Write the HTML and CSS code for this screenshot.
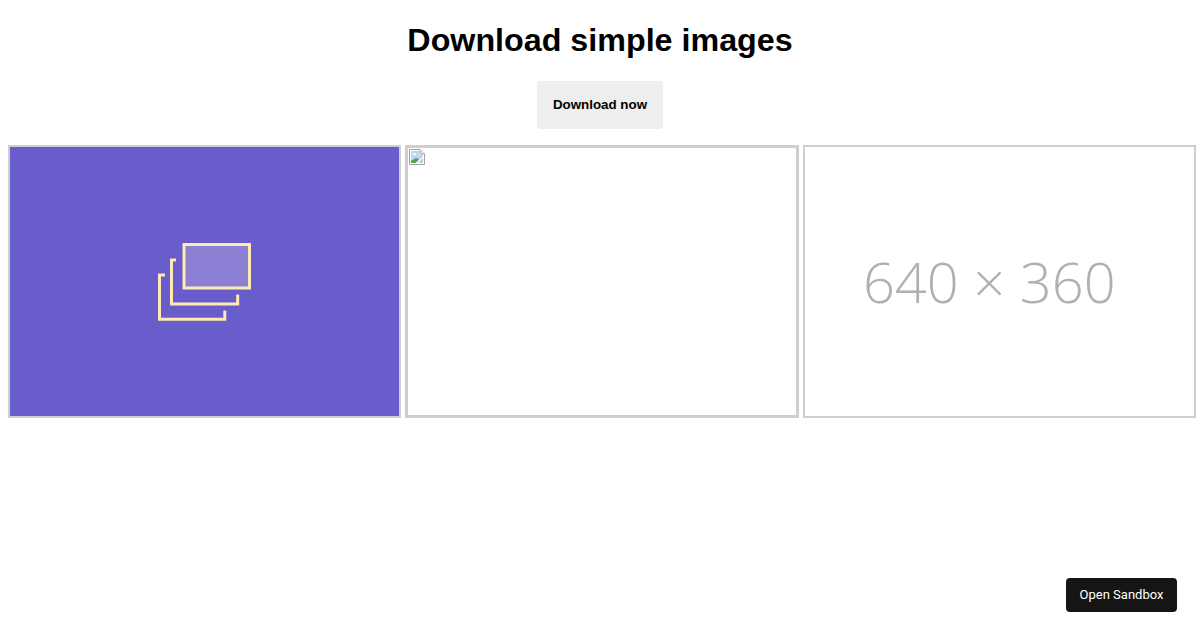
FILE: index.html
```html
<!DOCTYPE html>
<html>
  <head>
    <meta charset="UTF-8" />
    <meta name="viewport" content="width=device-width, initial-scale=1.0" />
    <title>Download simple images</title>
    <link rel="stylesheet" href="styles.css">
  </head>
  <body>
    <h2>Download simple images</h2>
    <div class="actions">
      <button type="button" class="download">Download now</button>
    </div>
    <div class="images">
      <div class="image image-purple">
        <svg width="93" height="78" viewBox="0 0 93 78">
          <rect x="26" y="1.500" width="65.500" height="43.500" fill="#8b80d3" stroke="#ffe9b4" stroke-width="3" />
          <path d="M18 17H13.500V61H79.700V51.500" fill="none" stroke="#ffe9b4" stroke-width="3" />
          <path d="M7 32H1.500V76.300H66.800V67.500" fill="none" stroke="#ffe9b4" stroke-width="3" />
        </svg>
      </div>
      <div class="image image-broken">
        <svg class="broken-icon" width="16" height="16" viewBox="0 0 16 16">
          <path d="M.5.500H11L15.500 5V15.500H.5Z" fill="#fff" stroke="#a3a3a3" />
          <path d="M11 .5V5H15.500" fill="#e8e8e8" stroke="#a3a3a3" />
          <path d="M2 2H10V6H14V7.500L8 13.500 5 14H2Z" fill="#bcd6f5" />
          <path d="M3 4H7V6H4Z" fill="#eef5fd" />
          <path d="M2 14V12L7 9 10 10 6.500 14Z" fill="#4ca63a" />
          <path d="M14 9V14H9.500Z" fill="#c8c8c8" />
        </svg>
      </div>
      <div class="image image-size">640 × 360</div>
    </div>
    <a class="open-sandbox">Open Sandbox</a>
  </body>
</html>
```

FILE: styles.css
```css
body {
  margin: 8px 4px 8px 8px;
  font-family: "Liberation Sans", Arial, sans-serif;
  background-color: white;
}

h2 {
  margin: 14px 0 22px;
  padding-right: 4px;
  text-align: center;
  font-size: 32.250px;
  line-height: 37px;
  color: black;
}

.actions {
  display: flex;
  justify-content: center;
  margin-bottom: 16px;
  padding-right: 4px;
}

.download {
  width: 126px;
  height: 48px;
  padding: 0 0 2px;
  border: none;
  border-radius: 3px;
  background-color: #eee;
  color: black;
  font-family: "Liberation Sans", Arial, sans-serif;
  font-size: 13.333px;
  font-weight: bold;
}

.images {
  display: grid;
  grid-template-columns: repeat(3, 1fr);
  column-gap: 4px;
}

.image {
  height: 273px;
  box-sizing: border-box;
  border: 2px solid #cfcfcf;
}

.image-purple {
  display: flex;
  align-items: center;
  justify-content: center;
  background-color: #695ccb;
}

.image-broken {
  border-width: 3px;
  padding: 1px;
}

.broken-icon {
  display: block;
}

.image-size {
  display: flex;
  align-items: center;
  justify-content: center;
  padding: 0 20px 1px 0;
  font-family: "Open Sans", sans-serif;
  font-weight: 300;
  font-size: 56px;
  color: #b0b0b0;
}

.open-sandbox {
  position: fixed;
  right: 23px;
  bottom: 18px;
  width: 111px;
  height: 34px;
  border-radius: 4px;
  background-color: #151515;
  color: white;
  font-family: Roboto, sans-serif;
  font-size: 13px;
  line-height: 34px;
  text-align: center;
}
```
